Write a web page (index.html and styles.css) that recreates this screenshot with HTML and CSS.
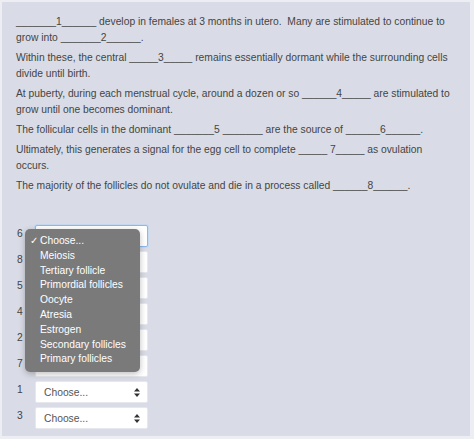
FILE: index.html
```html
<!DOCTYPE html>
<html>
<head>
<meta charset="utf-8">
<link rel="stylesheet" href="styles.css">
</head>
<body>
<div class="panel">
  <div class="text">
    <p>_______1______ develop in females at 3 months in utero.&nbsp; Many are stimulated to continue to grow into _______2______.</p>
    <p>Within these, the central _____3_____ remains essentially dormant while the surrounding cells divide until birth.</p>
    <p>At puberty, during each menstrual cycle, around a dozen or so ______4_____ are stimulated to grow until one becomes dominant.</p>
    <p>The follicular cells in the dominant _______5 _______ are the source of ______6______.</p>
    <p>Ultimately, this generates a signal for the egg cell to complete _____ 7_____ as ovulation occurs.</p>
    <p>The majority of the follicles do not ovulate and die in a process called ______8______.</p>
  </div>
  <div class="answers">
    <div class="row"><span class="num">6</span><div class="select focused"></div></div>
    <div class="row"><span class="num">8</span><div class="select"></div></div>
    <div class="row"><span class="num">5</span><div class="select"></div></div>
    <div class="row"><span class="num">4</span><div class="select"></div></div>
    <div class="row"><span class="num">2</span><div class="select"></div></div>
    <div class="row"><span class="num">7</span><div class="select"></div></div>
    <div class="row"><span class="num">1</span><div class="select"><span class="val">Choose...</span><svg class="arrow" width="6" height="9" viewBox="0 0 6 9"><path d="M3 0 L6 3.5 H0 Z M3 9 L6 5.5 H0 Z" fill="#333"/></svg></div></div>
    <div class="row"><span class="num">3</span><div class="select"><span class="val">Choose...</span><svg class="arrow" width="6" height="9" viewBox="0 0 6 9"><path d="M3 0 L6 3.5 H0 Z M3 9 L6 5.5 H0 Z" fill="#333"/></svg></div></div>
    <ul class="menu">
      <li class="checked"><span class="check">✓</span>Choose...</li>
      <li>Meiosis</li>
      <li>Tertiary follicle</li>
      <li>Primordial follicles</li>
      <li>Oocyte</li>
      <li>Atresia</li>
      <li>Estrogen</li>
      <li>Secondary follicles</li>
      <li>Primary follicles</li>
    </ul>
  </div>
</div>
</body>
</html>
```

FILE: styles.css
```css
html, body {
  margin: 0;
  padding: 0;
  background: #eceef3;
}
body {
  font-family: "Liberation Sans", Arial, sans-serif;
  font-size: 10.3px;
  color: #444;
}
.panel {
  box-sizing: border-box;
  margin: 2px 4px 0 2px;
  width: 468px;
  height: 434px;
  background: #d9dce6;
  padding: 12px 14px 0 14px;
}
.text p {
  margin: 0 0 4px 0;
  line-height: 16px;
}
.answers {
  position: relative;
  margin-top: 31px;
  display: flex;
  flex-direction: column;
  gap: 4px;
}
.row {
  display: flex;
  align-items: center;
  height: 22px;
}
.num {
  width: 19px;
  padding-left: 1px;
  box-sizing: border-box;
  color: #444;
  align-self: flex-start;
  padding-top: 3px;
}
.select {
  box-sizing: border-box;
  width: 113px;
  height: 22px;
  background: #fff;
  border: 1px solid #e6e8ee;
  border-radius: 2px;
  display: flex;
  align-items: center;
  justify-content: space-between;
  padding: 0 7px 0 8px;
  color: #555;
}
.select.focused {
  border: 1px solid #8fb8e8;
  box-shadow: 0 0 0 1px #c4d8f0;
}
.arrow {
  display: block;
}
.menu {
  position: absolute;
  left: 9px;
  top: 4px;
  width: 115px;
  margin: 0;
  padding: 5px 0 5px 0;
  list-style: none;
  background: #7a7a7b;
  border-radius: 5px;
  box-shadow: 0 2px 6px rgba(0,0,0,0.25);
  color: #fff;
}
.menu li {
  position: relative;
  padding-left: 15px;
  line-height: 14.8px;
  white-space: nowrap;
}
.menu .check {
  position: absolute;
  left: 5px;
  top: 0;
  font-size: 10px;
}
```
